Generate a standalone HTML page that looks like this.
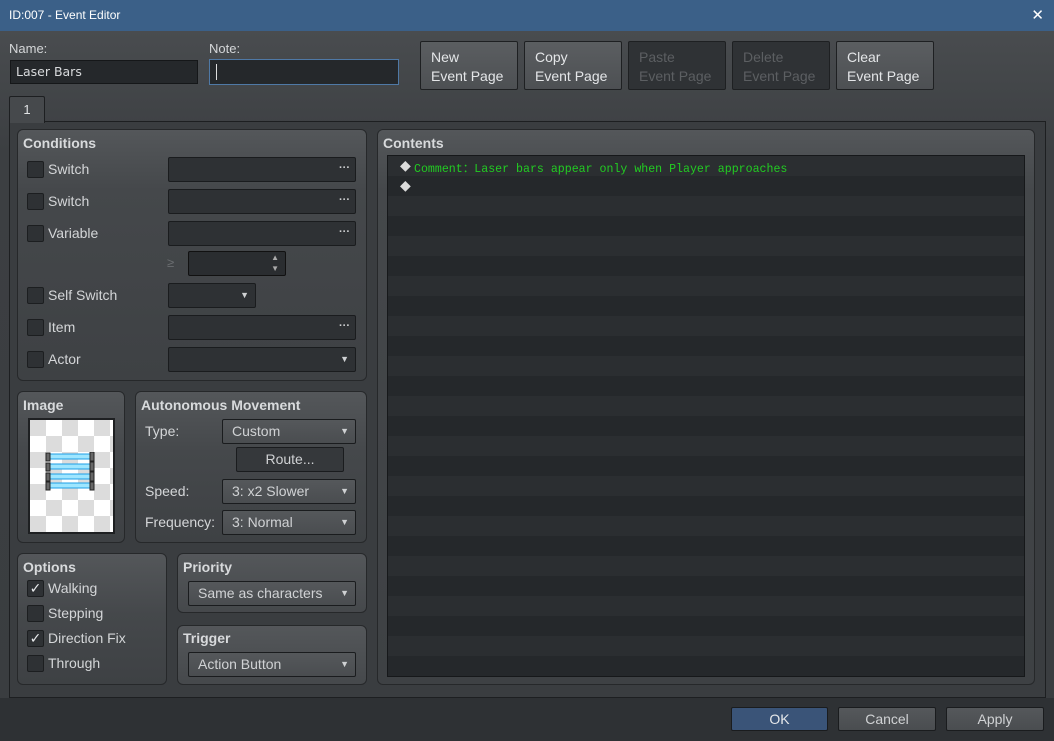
<!DOCTYPE html>
<html><head><meta charset="utf-8"><style>
*{box-sizing:border-box;margin:0;padding:0}
body{width:1054px;height:741px;background:#3f4245;font-family:"Liberation Sans","DejaVu Sans",sans-serif;font-size:13px;color:#d4d6d8;position:relative;overflow:hidden}
.a{position:absolute}
#title{left:0;top:0;width:1054px;height:31px;background:#3b6088;color:#fff;font-size:12px;line-height:31px;padding-left:9px}
#body{left:0;top:31px;width:1054px;height:710px;background:linear-gradient(#494c4f,#3c3f42 120px,#3a3d40)}
.inp{background:#25282b;border:1px solid #151719;}
.btn{background:linear-gradient(#5b5e61,#4d5053);border:1px solid #1e2022;border-radius:2px;color:#e4e6e8;font-size:14px;line-height:19px;padding:6px 0 0 10px}
.btn.dis{background:#2f3235;color:#5c5f62}
.panel{background:linear-gradient(#54575a,#45484b 60px,#3e4144);border:1px solid #26282a;border-radius:6px}
.h{font-weight:bold;font-size:14px;color:#d8dadc}
.cb{width:17px;height:17px;background:#2e3134;border:1px solid #1c1e20;border-radius:2px}
.fld{background:#2e3134;border:1px solid #1a1c1e;border-radius:2px;color:#d0d2d4;font-size:14px;padding-left:9px;line-height:22px}
.dd{background:linear-gradient(#55585b,#4a4d50);border:1px solid #1a1c1e;border-radius:2px;color:#d0d2d4;font-size:14px;padding-left:9px;line-height:22px}
.arr{position:absolute;right:6px;top:0;font-size:9px;color:#cfd1d3}
.dots{position:absolute;right:5px;top:3px;font-size:11px;line-height:14px;color:#cfd1d3;letter-spacing:0px;font-weight:bold}
.lbl{font-size:14px;color:#d4d6d8}
.ck{color:#e8eaec;font-size:14px;line-height:15px;text-align:center;font-weight:bold}
</style></head><body>
<div class="a" id="title">ID:007 - Event Editor</div>
<div class="a" style="right:10px;top:6px;color:#fff;font-size:15px">✕</div>
<div class="a" id="body"></div>

<div class="a lbl" style="left:9px;top:41px;font-size:13px">Name:</div>
<div class="a inp" style="left:10px;top:60px;width:188px;height:24px;color:#d8dadc;font-family:'DejaVu Sans',sans-serif;font-size:12.5px;line-height:22px;padding-left:5px">Laser Bars</div>
<div class="a lbl" style="left:209px;top:41px;font-size:13px">Note:</div>
<div class="a inp" style="left:209px;top:59px;width:190px;height:26px;border-color:#4f79a6"><div class="a" style="left:6px;top:4px;width:1px;height:16px;background:#ddd"></div></div>

<div class="a btn" style="left:420px;top:41px;width:98px;height:49px">New<br>Event Page</div>
<div class="a btn" style="left:524px;top:41px;width:98px;height:49px">Copy<br>Event Page</div>
<div class="a btn dis" style="left:628px;top:41px;width:98px;height:49px">Paste<br>Event Page</div>
<div class="a btn dis" style="left:732px;top:41px;width:98px;height:49px">Delete<br>Event Page</div>
<div class="a btn" style="left:836px;top:41px;width:98px;height:49px">Clear<br>Event Page</div>

<div class="a" style="left:0px;top:698px;width:1054px;height:43px;background:#2e3134"></div>
<div class="a" style="left:9px;top:121px;width:1037px;height:577px;background:#3a3d40;border:1px solid #1d1f21"></div>
<div class="a" style="left:9px;top:96px;width:36px;height:27px;background:#46494c;border:1px solid #1d1f21;border-bottom:none;border-radius:2px 2px 0 0;text-align:center;line-height:26px;color:#e0e2e4">1</div>

<!-- Conditions -->
<div class="a panel" style="left:17px;top:129px;width:350px;height:252px"></div>
<div class="a h" style="left:23px;top:135px">Conditions</div>
<div class="a cb" style="left:27px;top:161px"></div><div class="a lbl" style="left:48px;top:161px">Switch</div>
<div class="a fld" style="left:168px;top:157px;width:188px;height:25px"><span class="dots">···</span></div>
<div class="a cb" style="left:27px;top:193px"></div><div class="a lbl" style="left:48px;top:193px">Switch</div>
<div class="a fld" style="left:168px;top:189px;width:188px;height:25px"><span class="dots">···</span></div>
<div class="a cb" style="left:27px;top:225px"></div><div class="a lbl" style="left:48px;top:225px">Variable</div>
<div class="a fld" style="left:168px;top:221px;width:188px;height:25px"><span class="dots">···</span></div>
<div class="a" style="left:167px;top:255px;color:#6b6e71;font-size:13px">≥</div>
<div class="a fld" style="left:188px;top:251px;width:98px;height:25px;background:#2a2d30;border-color:#111"><span class="arr" style="top:-5px;font-size:8px;color:#aaa">▲</span><span class="arr" style="top:6px;font-size:8px;color:#aaa">▼</span></div>
<div class="a cb" style="left:27px;top:287px"></div><div class="a lbl" style="left:48px;top:287px">Self Switch</div>
<div class="a fld" style="left:168px;top:283px;width:88px;height:25px"><span class="arr">▼</span></div>
<div class="a cb" style="left:27px;top:319px"></div><div class="a lbl" style="left:48px;top:319px">Item</div>
<div class="a fld" style="left:168px;top:315px;width:188px;height:25px"><span class="dots">···</span></div>
<div class="a cb" style="left:27px;top:351px"></div><div class="a lbl" style="left:48px;top:351px">Actor</div>
<div class="a fld" style="left:168px;top:347px;width:188px;height:25px"><span class="arr">▼</span></div>

<!-- Image -->
<div class="a panel" style="left:17px;top:391px;width:108px;height:152px"></div>
<div class="a h" style="left:23px;top:397px">Image</div>
<div class="a" style="left:28px;top:418px;width:87px;height:116px;border:2px solid #1e2022;background-color:#fff;background-image:linear-gradient(45deg,#dcdcdc 25%,transparent 25%,transparent 75%,#dcdcdc 75%),linear-gradient(45deg,#dcdcdc 25%,transparent 25%,transparent 75%,#dcdcdc 75%);background-size:32px 32px;background-position:16px 0,0 16px"></div>
<svg class="a" style="left:45px;top:452px" width="52" height="48">
<g fill="#9ee6ff" stroke="#1f9fe6" stroke-width="1">
<rect x="4" y="2" width="42" height="5"/><rect x="4" y="12" width="42" height="5"/><rect x="4" y="22" width="42" height="5"/><rect x="4" y="31" width="42" height="5"/></g>
<g fill="#666" stroke="#222"><rect x="1" y="1" width="4" height="8"/><rect x="45" y="0" width="4" height="9"/><rect x="1" y="11" width="4" height="8"/><rect x="45" y="10" width="4" height="9"/><rect x="1" y="21" width="4" height="8"/><rect x="45" y="20" width="4" height="9"/><rect x="1" y="30" width="4" height="8"/><rect x="45" y="30" width="4" height="8"/></g>
</svg>

<!-- Autonomous -->
<div class="a panel" style="left:135px;top:391px;width:232px;height:152px"></div>
<div class="a h" style="left:141px;top:397px">Autonomous Movement</div>
<div class="a lbl" style="left:145px;top:423px">Type:</div>
<div class="a dd" style="left:222px;top:419px;width:134px;height:25px">Custom<span class="arr">▼</span></div>
<div class="a dd" style="left:236px;top:447px;width:108px;height:25px;background:#35383b;text-align:center;padding:0">Route...</div>
<div class="a lbl" style="left:145px;top:483px">Speed:</div>
<div class="a dd" style="left:222px;top:479px;width:134px;height:25px">3: x2 Slower<span class="arr">▼</span></div>
<div class="a lbl" style="left:145px;top:514px">Frequency:</div>
<div class="a dd" style="left:222px;top:510px;width:134px;height:25px">3: Normal<span class="arr">▼</span></div>

<!-- Options -->
<div class="a panel" style="left:17px;top:553px;width:150px;height:132px"></div>
<div class="a h" style="left:23px;top:559px">Options</div>
<div class="a cb ck" style="left:27px;top:580px">✓</div><div class="a lbl" style="left:48px;top:580px">Walking</div>
<div class="a cb" style="left:27px;top:605px"></div><div class="a lbl" style="left:48px;top:605px">Stepping</div>
<div class="a cb ck" style="left:27px;top:630px">✓</div><div class="a lbl" style="left:48px;top:630px">Direction Fix</div>
<div class="a cb" style="left:27px;top:655px"></div><div class="a lbl" style="left:48px;top:655px">Through</div>

<div class="a panel" style="left:177px;top:553px;width:190px;height:60px"></div>
<div class="a h" style="left:183px;top:559px">Priority</div>
<div class="a dd" style="left:188px;top:581px;width:168px;height:25px">Same as characters<span class="arr">▼</span></div>
<div class="a panel" style="left:177px;top:625px;width:190px;height:60px"></div>
<div class="a h" style="left:183px;top:630px">Trigger</div>
<div class="a dd" style="left:188px;top:652px;width:168px;height:25px">Action Button<span class="arr">▼</span></div>

<!-- Contents -->
<div class="a panel" style="left:377px;top:129px;width:658px;height:556px"></div>
<div class="a h" style="left:383px;top:135px">Contents</div>
<div class="a" style="left:387px;top:155px;width:638px;height:522px;border:1px solid #16181a;background:repeating-linear-gradient(#2b2e31 0 20px,#25282b 20px 40px)"></div>
<div class="a" style="left:400px;top:158px;width:14px;height:14px;color:#dcdcdc;font-size:14px;line-height:14px">◆</div>
<div class="a" style="left:414px;top:160px;color:#22cc22;font-family:'Liberation Mono',monospace;font-size:11.6px">Comment：Laser bars appear only when Player approaches</div>
<div class="a" style="left:400px;top:178px;color:#dcdcdc;font-size:14px;line-height:14px">◆</div>

<!-- Bottom -->
<div class="a dd" style="left:731px;top:707px;width:97px;height:24px;background:#3a5478;text-align:center;padding:0;color:#e6e8ea">OK</div>
<div class="a dd" style="left:838px;top:707px;width:98px;height:24px;text-align:center;padding:0">Cancel</div>
<div class="a dd" style="left:946px;top:707px;width:98px;height:24px;text-align:center;padding:0">Apply</div>
</body></html>
